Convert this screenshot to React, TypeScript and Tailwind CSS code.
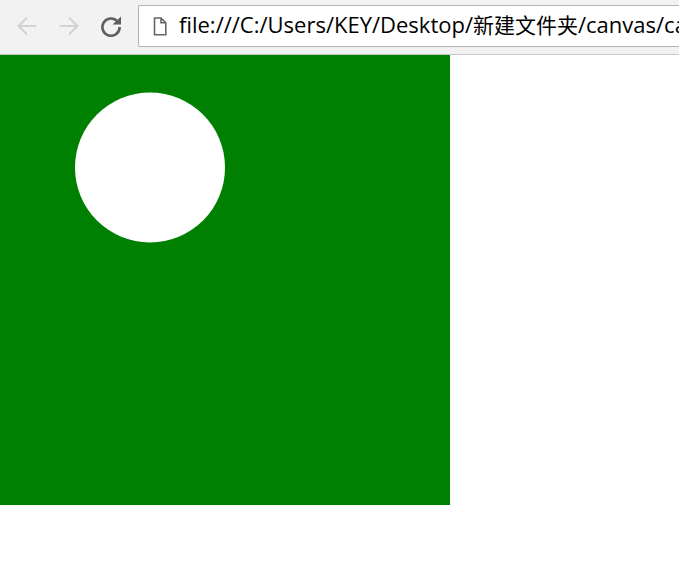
export default function App() {
  return (
    <div className="h-[573px] w-[679px] overflow-hidden bg-white">
      <div className="flex h-[55px] items-start border-b border-[#c8c8c8] bg-[#f2f2f2] pt-[5px]">
        <div className="flex h-[41px] w-[138px] shrink-0 items-center">
          <svg className="ml-[16px] mt-[1px]" width="22" height="22" viewBox="0 0 22 22" fill="none" stroke="#d3d3d3" strokeWidth="2">
            <path d="M20.5 11H2.5M11 2.5L2.5 11L11 19.5" />
          </svg>
          <svg className="ml-[20px] mt-[1px]" width="22" height="22" viewBox="0 0 22 22" fill="none" stroke="#d3d3d3" strokeWidth="2">
            <path d="M1.5 11H19.5M11 2.5L19.5 11L11 19.5" />
          </svg>
          <svg className="ml-[20px]" width="22" height="22" viewBox="0 0 22 22" fill="none">
            <path d="M17.5 6.5A8.6 8.6 0 1 0 19.6 12" stroke="#5f5f5f" strokeWidth="2.6" />
            <path d="M12.5 9.5L21 1.5V9.5Z" fill="#5f5f5f" />
          </svg>
        </div>
        <div className="flex h-[42px] flex-1 items-center rounded-l-[2px] border border-r-0 border-[#b4b4b4] bg-white pl-[14px]">
          <svg className="shrink-0" width="14" height="19" viewBox="0 0 14 19" fill="none" stroke="#666666" strokeWidth="1.6">
            <path d="M1.5 1H8L12.8 5.8V17.8H1.5ZM8 1V5.8H12.8" />
          </svg>
          <span className="ml-[12px] whitespace-nowrap pb-[2px] text-[22px] text-black [font-family:'Open_Sans','Noto_Sans_CJK_SC',sans-serif]">
            file:///C:/Users/KEY/Desktop/<span className="text-[21px]">新建文件夹</span>/canvas/canvas.html
          </span>
        </div>
      </div>
      <svg className="block h-[450px] w-[450px] bg-[#008000]" viewBox="0 0 450 450">
        <circle cx="150" cy="112.5" r="75" fill="#fff" />
      </svg>
    </div>
  );
}
